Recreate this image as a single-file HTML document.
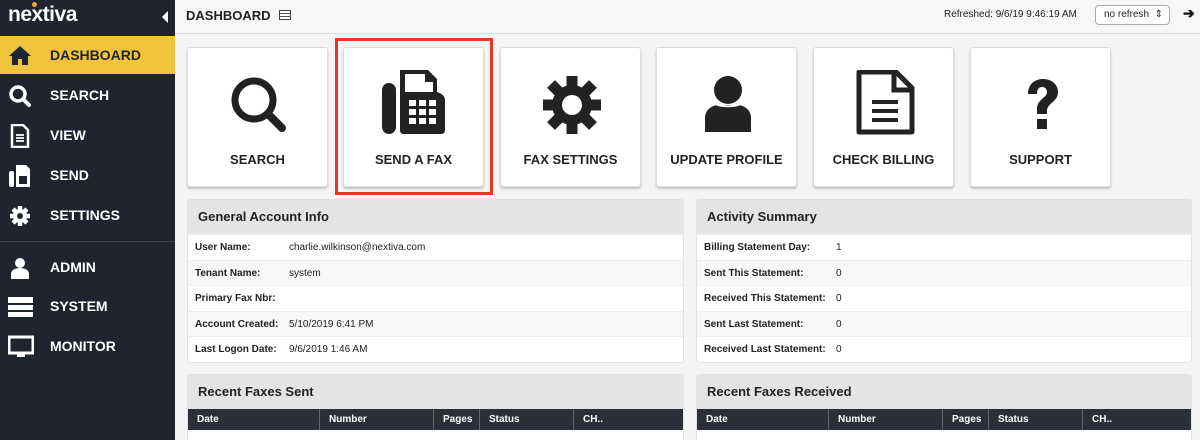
<!DOCTYPE html>
<html><head><meta charset="utf-8"><style>
*{margin:0;padding:0;box-sizing:border-box}
html,body{width:1200px;height:440px;overflow:hidden}
body{background:#f4f4f4;font-family:"Liberation Sans",sans-serif;position:relative}
.abs{position:absolute}
#side{left:0;top:0;width:175px;height:440px;background:#1f2430}
.mi{position:absolute;left:0;width:175px;height:38px;color:#fff;font-weight:bold;font-size:14px;line-height:38px}
.mi span{position:absolute;left:50px}
.mi svg{position:absolute;left:8px;top:8px}
#hdr{left:175px;top:0;width:1025px;height:34px;background:#f7f7f7;border-bottom:1px solid #ddd}
.tile{position:absolute;top:47px;width:141px;height:140px;background:#fff;border:1px solid #ddd;border-radius:3px;box-shadow:0 2px 2px rgba(0,0,0,.2)}
.tile .lb{position:absolute;left:0;right:0;top:104px;text-align:center;font-weight:bold;font-size:13px;color:#222}
.tile svg{position:absolute;left:40px;top:26px}
.pan{position:absolute;background:#fff;border:1px solid #e2e2e2;border-radius:3px;overflow:hidden}
.ph{height:34px;background:#e4e4e4;font-weight:bold;font-size:13px;color:#222;line-height:34px;padding-left:10px}
.row{height:25.6px;border-top:1px solid #eee;font-size:10px;line-height:25px;color:#222;position:relative;background:#fff}
.row:nth-child(even){background:#f7f7f7}
.row b{position:absolute;left:7px}
.row i{font-style:normal;position:absolute}
.th{height:21px;background:#2a2f38;position:relative;color:#fff;font-size:10px;font-weight:bold;line-height:21px}
.th span{position:absolute;top:0;height:21px;border-left:1px solid #666;padding-left:9px}
</style></head><body>
<div id="side" class="abs">
 <div class="abs" style="left:8px;top:3px;color:#fff;font-size:21px;font-weight:bold;letter-spacing:-0.5px">nextiva</div>
 <div class="abs" style="left:32px;top:2px;width:5px;height:5px;border-radius:50%;background:#e8a93a"></div>
 <div class="abs" style="left:162px;top:11px;width:0;height:0;border-top:6px solid transparent;border-bottom:6px solid transparent;border-right:6px solid #fff"></div>
 <div class="mi" style="top:36px;background:#f0c43a;color:#1f2430"><svg width="24" height="22" viewBox="0 0 24 22"><path d="M12 2L1 12h3v9h6v-6h4v6h6v-9h3z" fill="#1f2430"/></svg><span>DASHBOARD</span></div>
 <div class="mi" style="top:76px"><svg width="24" height="24" viewBox="0 0 24 24"><circle cx="10" cy="10" r="7" fill="none" stroke="#fff" stroke-width="3.5"/><path d="M15 15l6 6" stroke="#fff" stroke-width="4" stroke-linecap="round"/></svg><span>SEARCH</span></div>
 <div class="mi" style="top:116px"><svg width="24" height="24" viewBox="0 0 24 24"><path d="M4 1h11l5 5v17H4z" fill="none" stroke="#fff" stroke-width="2.5"/><path d="M8 11h8M8 14h8M8 17h8" stroke="#fff" stroke-width="1.8"/></svg><span>VIEW</span></div>
 <div class="mi" style="top:156px"><svg width="24" height="24" viewBox="0 0 24 24"><rect x="1" y="7" width="5" height="16" rx="2" fill="#fff"/><path d="M8 1h10l4 4v18H8z" fill="#fff"/><rect x="11" y="12" width="8" height="8" fill="#1f2430"/></svg><span>SEND</span></div>
 <div class="mi" style="top:196px"><svg width="24" height="24" viewBox="0 0 24 24"><circle cx="12" cy="12" r="7" fill="#fff"/><path d="M12 2v20M2 12h20M5 5l14 14M19 5L5 19" stroke="#fff" stroke-width="4.5"/><circle cx="12" cy="12" r="3" fill="#1f2430"/></svg><span>SETTINGS</span></div>
 <div class="abs" style="left:0;top:241px;width:175px;height:1px;background:#3b4150"></div>
 <div class="mi" style="top:248px"><svg width="24" height="24" viewBox="0 0 24 24"><circle cx="12" cy="7" r="5" fill="#fff"/><path d="M3 23v-5c0-4 4-6 9-6s9 2 9 6v5z" fill="#fff"/></svg><span>ADMIN</span></div>
 <div class="mi" style="top:287px"><svg width="26" height="24" viewBox="0 0 26 24"><rect x="0" y="2" width="25" height="6" fill="#fff"/><rect x="0" y="10" width="25" height="5" fill="#fff"/><rect x="0" y="17" width="25" height="5" fill="#fff"/></svg><span>SYSTEM</span></div>
 <div class="mi" style="top:327px"><svg width="26" height="24" viewBox="0 0 26 24"><rect x="1" y="2" width="24" height="16" fill="none" stroke="#fff" stroke-width="3"/><rect x="9" y="18" width="8" height="4" fill="#fff"/></svg><span>MONITOR</span></div>
</div>
<div id="hdr" class="abs">
 <div class="abs" style="left:11px;top:8px;font-weight:bold;font-size:13px;color:#222">DASHBOARD</div>
 <div class="abs" style="left:104px;top:10px;width:12px;height:10px;border:1px solid #444;background:repeating-linear-gradient(#fff 0 2px,#555 2px 3px)"></div>
 <div class="abs" style="left:769px;top:9px;font-size:10px;color:#222">Refreshed: 9/6/19 9:46:19 AM</div>
 <div class="abs" style="left:920px;top:5px;width:75px;height:20px;border:1px solid #aaa;border-radius:4px;background:#fff;font-size:10px;line-height:18px;padding-left:8px;color:#222">no refresh &nbsp;⇕</div>
 <div class="abs" style="left:1008px;top:5px;font-size:14px;font-weight:bold;color:#111">➔</div>
</div>

<div class="tile" style="left:187px"><svg width="62" height="62" viewBox="0 0 62 62"><circle cx="26" cy="26" r="19" fill="none" stroke="#222" stroke-width="7"/><path d="M40 40l14 14" stroke="#222" stroke-width="8" stroke-linecap="round"/></svg><div class="lb">SEARCH</div></div>
<div class="abs" style="left:335px;top:38px;width:158px;height:157px;border:3px solid #e03a24"></div>
<div class="tile" style="left:343px"><svg width="68" height="68" viewBox="0 0 68 68" style="left:37px;top:20px"><rect x="1" y="15" width="14" height="51" rx="7" fill="#222"/><path d="M19 2h28l9 9v13c4 1 8 4 8 8v30c0 3-2 4-4 4H22c-2 0-3-2-3-4z" fill="#222"/><path d="M24 6h20v8h8v10H24z" fill="#fff"/><g fill="#fff"><rect x="28" y="32" width="7" height="6"/><rect x="38" y="32" width="7" height="6"/><rect x="48" y="32" width="7" height="6"/><rect x="28" y="41" width="7" height="6"/><rect x="38" y="41" width="7" height="6"/><rect x="48" y="41" width="7" height="6"/><rect x="28" y="50" width="7" height="6"/><rect x="38" y="50" width="7" height="6"/><rect x="48" y="50" width="7" height="6"/></g></svg><div class="lb">SEND A FAX</div></div>
<div class="tile" style="left:500px"><svg width="62" height="62" viewBox="0 0 62 62"><circle cx="31" cy="31" r="20" fill="#222"/><g stroke="#222" stroke-width="11"><path d="M31 2v58M2 31h58M10 10l42 42M52 10L10 52"/></g><circle cx="31" cy="31" r="10" fill="#fff"/></svg><div class="lb">FAX SETTINGS</div></div>
<div class="tile" style="left:656px"><svg width="62" height="62" viewBox="0 0 62 62"><circle cx="31" cy="16" r="14" fill="#222"/><path d="M8 58v-14c0-9 8-13 14-13h18c6 0 14 4 14 13v14z" fill="#222"/><path d="M19 30c4 3 20 3 24 0" stroke="#fff" stroke-width="2" fill="none"/></svg><div class="lb">UPDATE PROFILE</div></div>
<div class="tile" style="left:813px"><svg width="62" height="66" viewBox="0 0 62 66" style="top:22px"><path d="M5 2h37l16 16v44H5z" fill="none" stroke="#222" stroke-width="5" stroke-linejoin="round"/><path d="M40 2v18h18" fill="none" stroke="#222" stroke-width="5"/><path d="M18 32h26M18 41h26M18 50h26" stroke="#222" stroke-width="4"/></svg><div class="lb">CHECK BILLING</div></div>
<div class="tile" style="left:970px"><svg width="62" height="62" viewBox="0 0 62 62"><path d="M17 20c0-10 7-15 15-15s15 5 15 13c0 10-11 11-11 19v3h-10v-5c0-10 10-11 10-17 0-3-2-5-5-5s-5 2-5 7z" fill="#222"/><rect x="26" y="45" width="10" height="10" fill="#222"/></svg><div class="lb">SUPPORT</div></div>

<div class="pan" style="left:187px;top:199px;width:497px;height:164px">
 <div class="ph">General Account Info</div>
 <div>
 <div class="row"><b>User Name:</b><i style="left:101px">charlie.wilkinson@nextiva.com</i></div>
 <div class="row"><b>Tenant Name:</b><i style="left:101px">system</i></div>
 <div class="row"><b>Primary Fax Nbr:</b></div>
 <div class="row"><b>Account Created:</b><i style="left:101px">5/10/2019 6:41 PM</i></div>
 <div class="row"><b>Last Logon Date:</b><i style="left:101px">9/6/2019 1:46 AM</i></div>
 </div>
</div>
<div class="pan" style="left:696px;top:199px;width:496px;height:164px">
 <div class="ph">Activity Summary</div>
 <div>
 <div class="row"><b>Billing Statement Day:</b><i style="left:139px">1</i></div>
 <div class="row"><b>Sent This Statement:</b><i style="left:139px">0</i></div>
 <div class="row"><b>Received This Statement:</b><i style="left:139px">0</i></div>
 <div class="row"><b>Sent Last Statement:</b><i style="left:139px">0</i></div>
 <div class="row"><b>Received Last Statement:</b><i style="left:139px">0</i></div>
 </div>
</div>
<div class="pan" style="left:187px;top:374px;width:497px;height:80px">
 <div class="ph">Recent Faxes Sent</div>
 <div class="th"><span style="left:0;border:0">Date</span><span style="left:131px">Number</span><span style="left:245px">Pages</span><span style="left:291px">Status</span><span style="left:385px">CH..</span></div>
</div>
<div class="pan" style="left:696px;top:374px;width:496px;height:80px">
 <div class="ph">Recent Faxes Received</div>
 <div class="th"><span style="left:0;border:0">Date</span><span style="left:131px">Number</span><span style="left:245px">Pages</span><span style="left:291px">Status</span><span style="left:385px">CH..</span></div>
</div>
</body></html>
